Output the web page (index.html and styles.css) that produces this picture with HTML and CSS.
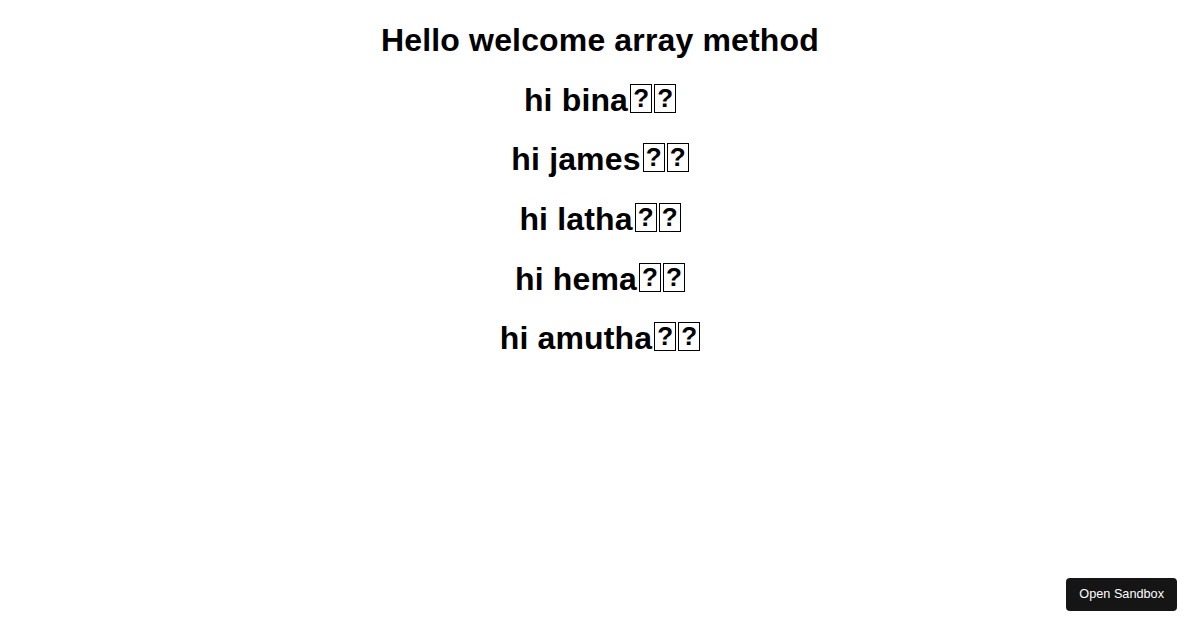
FILE: index.html
```html
<!DOCTYPE html>
<html>
<head>
<meta charset="utf-8">
<link rel="stylesheet" href="styles.css">
</head>
<body>
<div class="app">
  <h1 class="title">Hello welcome array method</h1>
  <h1 class="greet">hi bina<span class="tofu">?</span><span class="tofu">?</span></h1>
  <h1 class="greet">hi james<span class="tofu">?</span><span class="tofu">?</span></h1>
  <h1 class="greet">hi latha<span class="tofu">?</span><span class="tofu">?</span></h1>
  <h1 class="greet">hi hema<span class="tofu">?</span><span class="tofu">?</span></h1>
  <h1 class="greet">hi amutha<span class="tofu">?</span><span class="tofu">?</span></h1>
</div>
<a class="sandbox-btn">Open Sandbox</a>
</body>
</html>
```
FILE: styles.css
```css
body {
  margin: 0;
  background: #fff;
  font-family: "Liberation Sans", Arial, sans-serif;
}
.app {
  text-align: center;
  color: #000;
  padding-top: 1px;
}
.title, .greet {
  font-size: 32px;
  font-weight: bold;
  margin: 22.7px 0;
  letter-spacing: 0.15px;
}
.title {
  margin-top: 21px;
}
.tofu {
  display: inline-block;
  box-sizing: border-box;
  width: 22px;
  height: 29px;
  border: 1.5px solid #000;
  margin-left: 2px;
  font-size: 26px;
  line-height: 26px;
  letter-spacing: 0;
  text-align: center;
  vertical-align: -2px;
  overflow: hidden;
}
.sandbox-btn {
  position: fixed;
  right: 23px;
  bottom: 19px;
  background: #151515;
  color: #fff;
  font-family: "Liberation Sans", Arial, sans-serif;
  font-size: 12.7px;
  line-height: 15px;
  padding: 9px 13px;
  border-radius: 4px;
}
```
